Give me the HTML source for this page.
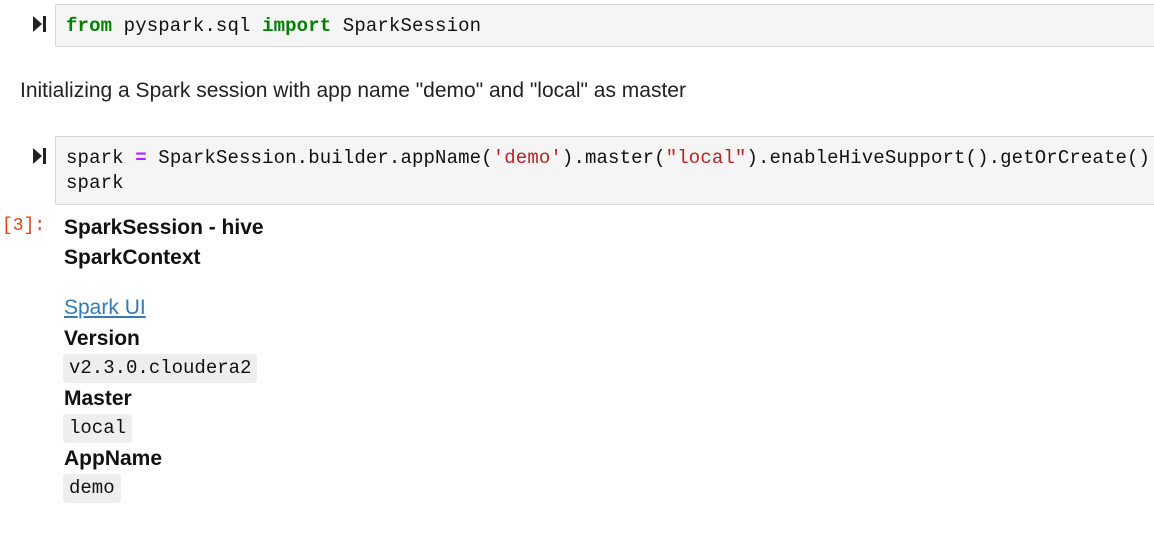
<!DOCTYPE html>
<html><head><style>
body{margin:0;width:1154px;height:553px;background:#fff;position:relative;overflow:hidden;font-family:"Liberation Sans",sans-serif;color:#000}
.a{position:absolute;white-space:pre}
.box{position:absolute;left:55px;width:1110px;background:#f5f5f5;border:1px solid #d6d6d6;border-radius:2px}
.m{font-family:"Liberation Mono",monospace;font-size:19px;letter-spacing:0.13px;color:#111}
.k{color:#008000;font-weight:bold}
.s{color:#ba2121}
.o{color:#aa22ff;font-weight:bold}
.b{font-weight:bold;font-size:21px;color:#111}
.c{position:absolute;left:63px;background:#eeeeee;border-radius:3px;font-family:"Liberation Mono",monospace;font-size:19px;padding:0 6px;height:29px;line-height:29px;color:#111}
.run{position:absolute;width:14px;height:16px}
</style></head><body>
<div class="box" style="top:4px;height:41px"></div>
<svg class="run" style="left:33px;top:16px" viewBox="0 0 14 16"><path d="M0 0L9 8L0 16Z" fill="#222"/><rect x="10" y="0" width="3" height="16" fill="#222"/></svg>
<div class="a m" style="left:66px;top:14px;line-height:24px"><span class="k">from</span> pyspark.sql <span class="k">import</span> SparkSession</div>
<div class="a" style="left:20px;top:79px;font-size:21px;color:#222">Initializing a Spark session with app name "demo" and "local" as master</div>
<div class="box" style="top:136px;height:67px"></div>
<svg class="run" style="left:33px;top:148px" viewBox="0 0 14 16"><path d="M0 0L9 8L0 16Z" fill="#222"/><rect x="10" y="0" width="3" height="16" fill="#222"/></svg>
<div class="a m" style="left:66px;top:146px;line-height:25px">spark <span class="o">=</span> SparkSession.builder.appName(<span class="s">'demo'</span>).master(<span class="s">"local"</span>).enableHiveSupport().getOrCreate()
spark</div>
<div class="a" style="left:2px;top:216px;font-family:'Liberation Mono',monospace;font-size:18px;color:#d84315">[3]:</div>
<div class="a b" style="left:64px;top:216px">SparkSession - hive</div>
<div class="a b" style="left:64px;top:246px">SparkContext</div>
<div class="a" style="left:64px;top:296px;font-size:21px;color:#337ab7;text-decoration:underline">Spark UI</div>
<div class="a b" style="left:64px;top:327px">Version</div>
<div class="c" style="top:354px">v2.3.0.cloudera2</div>
<div class="a b" style="left:64px;top:387px">Master</div>
<div class="c" style="top:414px">local</div>
<div class="a b" style="left:64px;top:447px">AppName</div>
<div class="c" style="top:474px">demo</div>
</body></html>
